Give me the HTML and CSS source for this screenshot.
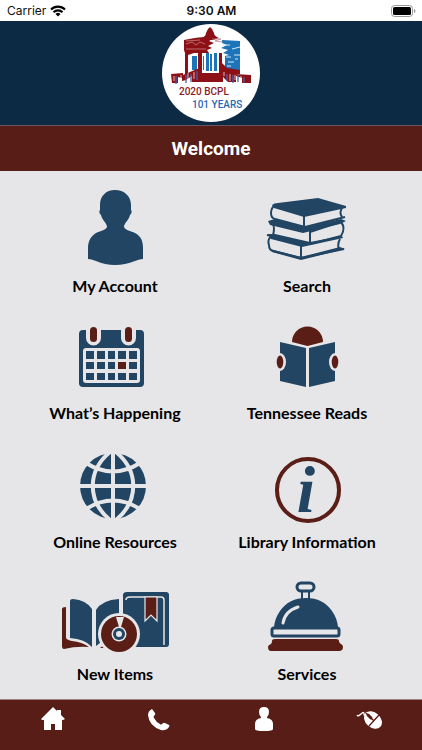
FILE: index.html
```html
<!DOCTYPE html>
<html lang="en">
<head>
  <meta charset="UTF-8" />
  <meta name="viewport" content="width=device-width, initial-scale=1" />
  <title>BCPL</title>
  <link rel="stylesheet" href="styles.css">
</head>
<body>

<div class="status">
  <div class="carrier">Carrier
    <svg width="16" height="12" viewBox="0 0 16 12">
      <path d="M1 4.5a10 10 0 0 1 14 0M3.5 7.2a6.4 6.4 0 0 1 9 0" fill="none" stroke="#000" stroke-width="2.1"/>
      <path d="M8 11.6L5.5 9.1a3.5 3.5 0 0 1 5 0z"/>
    </svg>
  </div>
  <div class="time">9:30 AM</div>
  <div class="battery">
    <svg width="25" height="12" viewBox="0 0 25 12">
      <rect x=".5" y=".5" width="21" height="11" rx="3" fill="none" stroke="#999"/>
      <rect x="2" y="2" width="18" height="8" rx="1.5"/>
      <path d="M23 4v4q1.500-.5 1.500-2t-1.500-2z" fill="#999"/>
    </svg>
  </div>
</div>

<header class="header">
  <svg class="logo" viewBox="0 0 98 98" role="img" aria-label="2020 BCPL 101 Years">
    <circle cx="49" cy="49" r="49" fill="#fff"/>
    <!-- right half blue -->
    <g fill="#1d74b8">
      <path d="M60 16l18 1v30l-15-2V32l4-1-6-2 5-3-7-2 6-3-5-2z"/>
      <path d="M30 32h5v14h-5zM44 29h3v18h-3zM48 30h2v17h-2zM52 29h3v18h-3zM41 32h1v14h-1z"/>
    </g>
    <path d="M64 33h5M72 31h6M66 38h6M61 21h7M70 25l8-2M65 42h4M73 35h3" stroke="#d5e8f5" stroke-width="1"/>
    <!-- building, left half red -->
    <g fill="#8c1016">
      <path d="M40 14q4-2 4-5l2-4 2-2 2 2 2 4q0 3 5 5l-6 2H43z"/>
      <path d="M22 16q14-3 22-3l8 1-5 3 5 2-6 3 4 2-5 2 2 3H23l-1-3z"/>
      <path d="M23 28h3v22h-3zM36 28h4v21h-4zM57 29h3v10l5 5 13 2v4H57zM26 28h9l-9 3z"/>
      <path d="M9 50l12-1v2l14-6 5-1v5h17v-4l16 5 16 1v8h-9v-5l-6-2v6h-8l-5-5v5H30v-6l-6 4-4 1v-3l-4-1v6h-6z"/>
    </g>
    <path d="M24 20l6-2 4 3 4-3 5 2M24 25h20M24 17l14-1" fill="none" stroke="#c98183" stroke-width=".8"/>
    <path d="M50 15l9 0-6 2 8 1" fill="none" stroke="#b9848f" stroke-width=".8"/>
    <path d="M14 52v8M24 51v8M29 50v8M35 47v9M65 50v7M71 51v8M76 51v7M82 53v6" stroke="#4a5faa" stroke-width="1.300"/>
    <path d="M12 52v5M19 51v4M26 49v7M32 48v7M62 48v4M68 50v7M73 51v5M79 52v4" stroke="#fff" stroke-width=".7"/>
    <text class="logo-text" x="17" y="71" fill="#8c1a20">2020 BCPL</text>
    <text class="logo-text" x="30" y="84" fill="#2a68b2">101 YEARS</text>
  </svg>
</header>

<h1 class="title">Welcome</h1>

<main class="menu">
  <a class="tile" href="#account">
    <svg class="icon" viewBox="0 0 120 88">
      <path class="blue" d="M60 3c9 0 16 6 16 15v5c1 1 1 3-1 5-1 5-6 8-6 12 1 3 7 4 11 6 6 3 8 8 8 15v11q-3 0-8 2-10 4-20 4t-19-4q-5-2-8-2V61c0-7 3-12 8-15 4-2 10-3 11-6 0-4-5-7-6-12-2-2-2-4-1-5v-5c0-9 6-15 15-15z"/>
    </svg>
    <span>My Account</span>
  </a>

  <a class="tile" href="#search">
    <svg class="icon" viewBox="0 0 120 88">
      <path class="blue" d="M25 18q2-2 6-2l40-5 28 8v2L57 30 27 21z"/>
      <path class="line" d="M28 18q-4 3-4 8t4 6l30 8 40-10M57 29v10M95 21q-3 5 0 9"/>
      <path class="blue" d="M21 34l7-2 29 8 37-8 5 2-6 3-37 9-33-8z"/>
      <path class="line" d="M26 37q2 5 0 11M63 44v12M94 35q5 6 0 14L63 57 20 48M93 35L63 45"/>
      <path class="blue" d="M21 47l7 0 35 8 32-6 1 2-41 9-31-8z"/>
      <path class="line" d="M25 49q-5 3-3 9 0 5 4 6l28 7 43-9M54 59v12M93 52q-3 5-1 11"/>
      <path class="blue" d="M23 62l31 8 39-10 5 2-44 11-29-8z"/>
    </svg>
    <span>Search</span>
  </a>

  <a class="tile" href="#events">
    <svg class="icon" viewBox="0 0 120 88">
      <rect class="blue" x="24" y="16" width="65" height="57" rx="4"/>
      <path class="light" d="M31 14h15v10a7 7 0 0 1-15 0zM66 14h15v10a7 7 0 0 1-15 0z"/>
      <rect class="red" x="35" y="13" width="7" height="15" rx="3.500"/>
      <rect class="red" x="70" y="13" width="7" height="15" rx="3.500"/>
      <rect class="light" x="28" y="34" width="57" height="35" rx="3"/>
      <path class="blue" d="M31 37h8v8h-8zM42 37h8v8h-8zM53 37h7v8h-7zM63 37h8v8h-8zM74 37h8v8h-8zM31 48h8v7h-8zM42 48h8v7h-8zM53 48h7v7h-7zM74 48h8v7h-8zM31 59h8v7h-8zM42 59h8v7h-8zM53 59h7v7h-7zM63 59h8v7h-8zM74 59h8v7h-8z"/>
      <path class="red" d="M63 48h8v7h-8z"/>
    </svg>
    <span>What’s Happening</span>
  </a>

  <a class="tile" href="#reads">
    <svg class="icon" viewBox="0 0 120 88">
      <path class="red" d="M45 28a15.500 15.500 0 0 1 31 0l-15.500 4z"/>
      <path class="blue" d="M33 28l26 6v39l-26-6zM88 28l-26 6v39l26-6z"/>
      <ellipse class="light" cx="33" cy="48" rx="6" ry="9"/>
      <ellipse class="light" cx="88" cy="48" rx="6" ry="9"/>
      <ellipse class="red" cx="33" cy="48" rx="3.300" ry="6.500"/>
      <ellipse class="red" cx="88" cy="48" rx="3.300" ry="6.500"/>
    </svg>
    <span>Tennessee Reads</span>
  </a>

  <a class="tile" href="#resources">
    <svg class="icon" viewBox="0 0 120 88">
      <circle class="blue" cx="58" cy="43" r="33"/>
      <path class="gap" d="M58 8v70M23 43h70M55 9C32 28 32 58 55 77M61 9c23 19 23 49 0 68M31 20q27 17 54 0M31 66q27-17 54 0"/>
    </svg>
    <span>Online Resources</span>
  </a>

  <a class="tile" href="#info">
    <svg class="icon" viewBox="0 0 120 88">
      <circle cx="61" cy="47" r="31" fill="none" stroke="#5a1e16" stroke-width="4"/>
      <text class="info-letter" x="59" y="69">i</text>
    </svg>
    <span>Library Information</span>
  </a>

  <a class="tile" href="#new">
    <svg class="icon" viewBox="0 0 120 88">
      <path class="red" d="M7 34q0-2 4-2v31q1 2 6 3 10 1 17 6-13-1-25 2-2 0-2-3zM45 73l4-3 3 3z"/>
      <path class="blue" d="M15 26q0-2 3-2 13 1 19 10v38q-7-8-22-9zM41 35q6-10 23-11v22L50 66q-5 1-9 5z"/>
      <path class="blue" d="M68 20q0-3 4-3h39q3 0 3 3v49q0 3-3 3H68z"/>
      <path d="M71 25q0-3 4-3h31q3 0 3 3v45" fill="none" stroke="#e6e6e8" stroke-width="1.500"/>
      <path class="red" d="M90 22h12v24l-6-6-6 6z" stroke="#e6e6e8" stroke-width="1.200"/>
      <circle class="light" cx="64" cy="59" r="21"/>
      <circle class="red" cx="64" cy="59" r="18"/>
      <path class="light" d="M61 42h8l-3 10h-2z"/>
      <circle class="light" cx="64" cy="59" r="7.500"/>
      <circle class="blue" cx="64" cy="59" r="6"/>
      <circle class="light" cx="64" cy="59" r="3"/>
    </svg>
    <span>New Items</span>
  </a>

  <a class="tile" href="#services">
    <svg class="icon" viewBox="0 0 120 88">
      <rect class="line thick" x="50" y="8" width="17" height="8" rx="4"/>
      <path class="line" d="M55 17v7M62 17v7"/>
      <path class="blue" d="M27 52q1-9 6-16 9-13 26-13t26 13q5 7 6 16z"/>
      <path d="M36 48q2-12 15-16" fill="none" stroke="#e6e6e8" stroke-width="3" stroke-linecap="round"/>
      <rect class="line thick" x="25" y="53" width="67" height="8" rx="2"/>
      <path class="red" d="M28 64h61q3 0 3 2t2 3q2 1 2 3 0 4-4 4H24q-3 0-3-4 0-2 3-3 1-1 1-3t3-2z"/>
    </svg>
    <span>Services</span>
  </a>
</main>

<nav class="footer">
  <a href="#home" aria-label="Home">
    <svg width="26" height="26" viewBox="0 0 26 26">
      <path d="M13 1l4 4V4h4v5l4 4-2 1h-1v10h-7v-6h-4v6H4V14H2l-1-1z"/>
    </svg>
  </a>
  <a href="#call" aria-label="Call">
    <svg width="26" height="26" viewBox="0 0 26 26">
      <path d="M7 3l3 4q1 1-1 3-1 1 0 2 2 4 6 6 1 1 2 0 2-2 3-1l4 2q1 0 0 2-3 4-8 3Q4 20 3 9q0-4 4-6z"/>
    </svg>
  </a>
  <a href="#profile" aria-label="Profile">
    <svg width="26" height="26" viewBox="0 0 26 26">
      <path d="M13 1q5 0 5 5 0 3-2 5v1q6 1 6 6v5q0 2-9 2t-9-2v-5q0-5 6-6v-1q-2-2-2-5 0-5 5-5z"/>
    </svg>
  </a>
  <a href="#online" aria-label="Online">
    <svg width="26" height="26" viewBox="0 0 26 26">
      <path d="M1 9q1 2 4-1t3 0 3-2" fill="none" stroke="#fff" stroke-width="1.300"/>
      <ellipse cx="17" cy="14" rx="10" ry="7.500" transform="rotate(42 17 14)"/>
      <path d="M13 20l10-11M10 7l8 8" fill="none" stroke="#571d16" stroke-width="1.300"/>
      <path d="M12 9l3 3" stroke="#571d16" stroke-width="3" stroke-linecap="round"/>
    </svg>
  </a>
</nav>

</body>
</html>
```
FILE: styles.css
```css
body {
  margin: 0;
  min-height: 100vh;
  display: flex;
  flex-direction: column;
  background-color: #e6e6e8;
  font-family: Lato, Carlito, sans-serif;
}

.status {
  display: grid;
  grid-template-columns: 1fr auto 1fr;
  align-items: center;
  height: 21px;
  padding: 0 6px 0 7px;
  background: #fff;
  color: #111;
  font-family: Inter, sans-serif;
  font-size: 12px;
}

.carrier {
  display: flex;
  align-items: center;
  gap: 4px;
}

.time { font-weight: 600; }

.battery {
  display: flex;
  justify-content: flex-end;
}

.header {
  display: flex;
  justify-content: center;
  padding: 3px 0;
  background-color: #0c2a44;
  border-bottom: 1px solid #6a5560;
}

.logo {
  width: 98px;
  height: 98px;
}

.logo-text {
  font-family: Roboto, sans-serif;
  font-size: 10px;
  font-weight: 500;
}

.title {
  margin: 0;
  background-color: #571d16;
  color: #fff;
  font-family: Roboto, sans-serif;
  font-size: 19px;
  font-weight: bold;
  line-height: 45px;
  text-align: center;
}

/* Menu tiles */
.menu {
  flex: 1;
  display: grid;
  grid-template-columns: 1fr 1fr;
  grid-template-rows: 126px 127px 129px 132px;
  padding: 0 19px 14px;
}

.tile {
  display: flex;
  flex-direction: column;
  align-items: center;
  justify-content: flex-end;
  color: #000;
  font-size: 16px;
  font-weight: bold;
  line-height: 22px;
  text-decoration: none;
  white-space: nowrap;
}

.icon {
  width: 120px;
  height: 88px;
}

.blue { fill: #214563; }
.red { fill: #5a1e16; }
.light { fill: #e6e6e8; }

.line {
  fill: none;
  stroke: #214563;
  stroke-width: 2;
}

.thick { stroke-width: 3; }

.gap {
  fill: none;
  stroke: #e6e6e8;
  stroke-width: 4;
}

.info-letter {
  fill: #214563;
  font-family: "Liberation Serif", serif;
  font-size: 66px;
  font-style: italic;
  font-weight: bold;
  text-anchor: middle;
}

/* Bottom bar */
.footer {
  display: grid;
  grid-template-columns: repeat(4, 1fr);
  height: 44px;
  padding-top: 6px;
  background-color: #571d16;
  border-top: 1px solid #9c8582;
}

.footer a {
  display: flex;
  justify-content: center;
  align-items: flex-start;
}

.footer svg { fill: #fff; }
```
